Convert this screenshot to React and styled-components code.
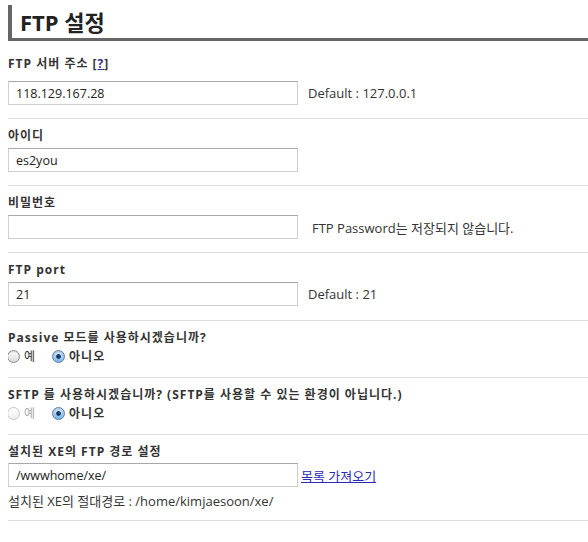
import styled, { createGlobalStyle } from "styled-components"

const GlobalStyle = createGlobalStyle`
    body {
        margin: 5px 0 0 8px;
        font-family: "Open Sans", "Noto Sans CJK KR", sans-serif;
        font-size: 13px;
        color: #333;
        background: #fff;
    }
`

export default function App() {
    return (
        <>
            <GlobalStyle />
            <Title>FTP 설정</Title>

            <Section>
                <Label $gap={9}>
                    FTP 서버 주소 <Help>[<a href="#">?</a>]</Help>
                </Label>
                <Field $gap={10}>
                    <TextInput defaultValue="118.129.167.28" />
                    <Note>Default : 127.0.0.1</Note>
                </Field>
            </Section>

            <Section>
                <Label>아이디</Label>
                <Field>
                    <TextInput defaultValue="es2you" />
                </Field>
            </Section>

            <Section>
                <Label>비밀번호</Label>
                <Field $gap={14}>
                    <TextInput type="password" />
                    <Note>FTP Password는 저장되지 않습니다.</Note>
                </Field>
            </Section>

            <Section $extra={1}>
                <Label>FTP port</Label>
                <Field $gap={10}>
                    <TextInput defaultValue="21" />
                    <Note>Default : 21</Note>
                </Field>
            </Section>

            <RadioSection>
                <Label $gap={0}>Passive 모드를 사용하시겠습니까?</Label>
                <RadioRow>
                    <RadioLabel>
                        <Radio type="radio" name="passive" />
                        예
                    </RadioLabel>
                    <RadioLabel $checked>
                        <Radio type="radio" name="passive" defaultChecked />
                        아니오
                    </RadioLabel>
                </RadioRow>
            </RadioSection>

            <RadioSection>
                <Label $gap={0}>SFTP 를 사용하시겠습니까? (SFTP를 사용할 수 있는 환경이 아닙니다.)</Label>
                <RadioRow>
                    <RadioLabel $disabled>
                        <Radio type="radio" name="sftp" disabled />
                        예
                    </RadioLabel>
                    <RadioLabel $checked>
                        <Radio type="radio" name="sftp" defaultChecked />
                        아니오
                    </RadioLabel>
                </RadioRow>
            </RadioSection>

            <PathSection>
                <Label $gap={3}>설치된 XE의 FTP 경로 설정</Label>
                <Field $gap={3}>
                    <TextInput defaultValue="/wwwhome/xe/" />
                    <FetchLink href="#">목록 가져오기</FetchLink>
                </Field>
                <PathNote>설치된 XE의 절대경로 : /home/kimjaesoon/xe/</PathNote>
            </PathSection>
        </>
    )
}

const Title = styled.h1`
    margin: 0 0 6px 0;
    padding: 0 0 0 8px;
    height: 33px;
    line-height: 34px;
    border-left: 4px solid #666;
    border-bottom: 3px solid #666;
    font-size: 22px;
    font-weight: bold;
    color: #222;
`

const Section = styled.div`
    padding: 8px 0 ${(p) => 13 + (p.$extra ?? 0)}px;
    border-bottom: 1px solid #ddd;
`

const RadioSection = styled(Section)`
    padding: 8px 0 11px;
`

const PathSection = styled(Section)`
    padding: 8px 0 10px;
`

const Label = styled.div`
    height: 17px;
    line-height: 17px;
    margin-bottom: ${(p) => p.$gap ?? 4}px;
    font-size: 12px;
    font-weight: bold;
    letter-spacing: 1px;
    color: #333;
`

const Help = styled.span`
    a {
        color: #33338f;
        text-decoration: underline;
    }
`

const Field = styled.div`
    display: flex;
    align-items: center;
    gap: ${(p) => p.$gap ?? 10}px;
`

const TextInput = styled.input`
    box-sizing: border-box;
    width: 290px;
    height: 24px;
    margin: 0;
    padding: 0 7px;
    border: 1px solid #cfcfcf;
    border-top-color: #a8a8a8;
    border-radius: 0;
    font-family: "Open Sans", "Noto Sans CJK KR", sans-serif;
    font-size: 12.5px;
    color: #222;
    outline: none;
`

const Note = styled.span`
    font-size: 13px;
    color: #333;
`

const FetchLink = styled.a`
    font-size: 13px;
    color: #2b2bb5;
    text-decoration: underline;
`

const PathNote = styled.div`
    margin-top: 6px;
    height: 17px;
    line-height: 17px;
    font-size: 13px;
    color: #333;
`

const RadioRow = styled.div`
    display: flex;
    align-items: center;
    height: 20px;
    gap: 18px;
`

const RadioLabel = styled.label`
    display: flex;
    align-items: center;
    gap: 4px;
    height: 20px;
    font-size: 12px;
    font-weight: ${(p) => (p.$checked ? "bold" : "normal")};
    letter-spacing: ${(p) => (p.$checked ? "1px" : "0")};
    color: ${(p) => (p.$disabled ? "#aaa" : "#333")};
`

const Radio = styled.input`
    appearance: none;
    -webkit-appearance: none;
    box-sizing: border-box;
    width: 13px;
    height: 13px;
    margin: 0 0 0 -1px;
    border-radius: 50%;
    border: 1px solid #8a8a8a;
    background: linear-gradient(#ffffff, #d9d9d9);
    box-shadow: inset 0 1px 1px rgba(0, 0, 0, 0.15);

    &:checked {
        border-color: #5a7fa8;
        background: radial-gradient(circle, #1d3c66 0 2px, transparent 2.6px),
            linear-gradient(#d4e8fb, #7ab3e6);
    }

    &:disabled {
        border-color: #c4c4c4;
        background: linear-gradient(#ffffff, #eeeeee);
        box-shadow: none;
    }
`
